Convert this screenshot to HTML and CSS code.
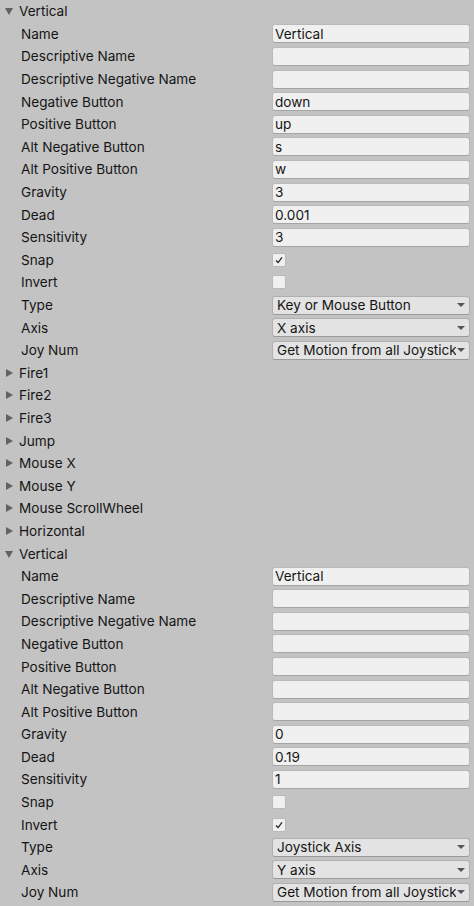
FILE: index.html
```html
<!DOCTYPE html>
<html lang="en">
<head>
    <meta charset="UTF-8">
    <meta name="viewport" content="width=device-width, initial-scale=1.0">
    <title>Input Manager</title>
    <link rel="stylesheet" href="styles.css">
</head>
<body>
    <div class="axes">
        <div class="row fold open">
            <svg class="arrow" viewBox="0 0 10 10"><polygon points="1,2 9,2 5,9"/></svg>
            <span>Vertical</span>
        </div>
        <div class="row prop"><span class="label">Name</span><div class="field">Vertical</div></div>
        <div class="row prop"><span class="label">Descriptive Name</span><div class="field"></div></div>
        <div class="row prop"><span class="label">Descriptive Negative Name</span><div class="field"></div></div>
        <div class="row prop"><span class="label">Negative Button</span><div class="field">down</div></div>
        <div class="row prop"><span class="label">Positive Button</span><div class="field">up</div></div>
        <div class="row prop"><span class="label">Alt Negative Button</span><div class="field">s</div></div>
        <div class="row prop"><span class="label">Alt Positive Button</span><div class="field">w</div></div>
        <div class="row prop"><span class="label">Gravity</span><div class="field">3</div></div>
        <div class="row prop"><span class="label">Dead</span><div class="field">0.001</div></div>
        <div class="row prop"><span class="label">Sensitivity</span><div class="field">3</div></div>
        <div class="row prop"><span class="label">Snap</span>
            <div class="check"><svg viewBox="0 0 14 14"><polyline points="3.5,7.5 6,10 10.5,4"/></svg></div>
        </div>
        <div class="row prop"><span class="label">Invert</span><div class="check"></div></div>
        <div class="row prop"><span class="label">Type</span>
            <div class="field select"><span>Key or Mouse Button</span><svg class="drop" viewBox="0 0 8 6"><polygon points="0,1 8,1 4,5"/></svg></div>
        </div>
        <div class="row prop"><span class="label">Axis</span>
            <div class="field select"><span>X axis</span><svg class="drop" viewBox="0 0 8 6"><polygon points="0,1 8,1 4,5"/></svg></div>
        </div>
        <div class="row prop"><span class="label">Joy Num</span>
            <div class="field select"><span>Get Motion from all Joystick</span><svg class="drop" viewBox="0 0 8 6"><polygon points="0,1 8,1 4,5"/></svg></div>
        </div>

        <div class="row fold"><svg class="arrow" viewBox="0 0 10 10"><polygon points="2,1 9,5 2,9"/></svg><span>Fire1</span></div>
        <div class="row fold"><svg class="arrow" viewBox="0 0 10 10"><polygon points="2,1 9,5 2,9"/></svg><span>Fire2</span></div>
        <div class="row fold"><svg class="arrow" viewBox="0 0 10 10"><polygon points="2,1 9,5 2,9"/></svg><span>Fire3</span></div>
        <div class="row fold"><svg class="arrow" viewBox="0 0 10 10"><polygon points="2,1 9,5 2,9"/></svg><span>Jump</span></div>
        <div class="row fold"><svg class="arrow" viewBox="0 0 10 10"><polygon points="2,1 9,5 2,9"/></svg><span>Mouse X</span></div>
        <div class="row fold"><svg class="arrow" viewBox="0 0 10 10"><polygon points="2,1 9,5 2,9"/></svg><span>Mouse Y</span></div>
        <div class="row fold"><svg class="arrow" viewBox="0 0 10 10"><polygon points="2,1 9,5 2,9"/></svg><span>Mouse ScrollWheel</span></div>
        <div class="row fold"><svg class="arrow" viewBox="0 0 10 10"><polygon points="2,1 9,5 2,9"/></svg><span>Horizontal</span></div>

        <div class="row fold open">
            <svg class="arrow" viewBox="0 0 10 10"><polygon points="1,2 9,2 5,9"/></svg>
            <span>Vertical</span>
        </div>
        <div class="row prop"><span class="label">Name</span><div class="field">Vertical</div></div>
        <div class="row prop"><span class="label">Descriptive Name</span><div class="field"></div></div>
        <div class="row prop"><span class="label">Descriptive Negative Name</span><div class="field"></div></div>
        <div class="row prop"><span class="label">Negative Button</span><div class="field"></div></div>
        <div class="row prop"><span class="label">Positive Button</span><div class="field"></div></div>
        <div class="row prop"><span class="label">Alt Negative Button</span><div class="field"></div></div>
        <div class="row prop"><span class="label">Alt Positive Button</span><div class="field"></div></div>
        <div class="row prop"><span class="label">Gravity</span><div class="field">0</div></div>
        <div class="row prop"><span class="label">Dead</span><div class="field">0.19</div></div>
        <div class="row prop"><span class="label">Sensitivity</span><div class="field">1</div></div>
        <div class="row prop"><span class="label">Snap</span><div class="check"></div></div>
        <div class="row prop"><span class="label">Invert</span>
            <div class="check"><svg viewBox="0 0 14 14"><polyline points="3.5,7.5 6,10 10.5,4"/></svg></div>
        </div>
        <div class="row prop"><span class="label">Type</span>
            <div class="field select"><span>Joystick Axis</span><svg class="drop" viewBox="0 0 8 6"><polygon points="0,1 8,1 4,5"/></svg></div>
        </div>
        <div class="row prop"><span class="label">Axis</span>
            <div class="field select"><span>Y axis</span><svg class="drop" viewBox="0 0 8 6"><polygon points="0,1 8,1 4,5"/></svg></div>
        </div>
        <div class="row prop"><span class="label">Joy Num</span>
            <div class="field select"><span>Get Motion from all Joystick</span><svg class="drop" viewBox="0 0 8 6"><polygon points="0,1 8,1 4,5"/></svg></div>
        </div>
    </div>
</body>
</html>
```

FILE: styles.css
```css
* {
    margin: 0;
    padding: 0;
    box-sizing: border-box;
}

body {
    font-family: Inter, 'Noto Sans', sans-serif;
    font-size: 13.6px;
    color: #151515;
    background: #c3c3c3;
    width: 474px;
    height: 906px;
    overflow: hidden;
}

.axes {
    display: flex;
    flex-direction: column;
}

.row {
    height: 22.6px;
    display: flex;
    align-items: center;
}

.fold {
    padding-left: 4px;
}

.fold .arrow {
    width: 10px;
    height: 10px;
    fill: #626262;
    margin-right: 5px;
}

.prop {
    padding-left: 21px;
    padding-right: 4px;
}

.label {
    width: 251px;
    flex-shrink: 0;
}

.field {
    flex: 1;
    height: 19px;
    background: #f0f0f0;
    border: 1px solid #b9b9b9;
    border-bottom-color: #a5a5a5;
    border-radius: 3px;
    padding: 0 2px;
    display: flex;
    align-items: center;
    white-space: nowrap;
    overflow: hidden;
}

.select {
    background: #e3e3e3;
    border-color: #b0b0b0;
    border-bottom-color: #9a9a9a;
    padding-left: 4px;
    padding-right: 4px;
}

.select span {
    flex: 1;
    overflow: hidden;
}

.select .drop {
    width: 8px;
    height: 6px;
    fill: #555555;
    flex-shrink: 0;
    margin-left: 1px;
}

.check {
    width: 14px;
    height: 14px;
    background: #f0f0f0;
    border: 1px solid #b9b9b9;
    border-radius: 2px;
    display: flex;
    align-items: center;
    justify-content: center;
}

.check svg {
    width: 12px;
    height: 12px;
    fill: none;
    stroke: #2a2a2a;
    stroke-width: 1.6;
}
```
